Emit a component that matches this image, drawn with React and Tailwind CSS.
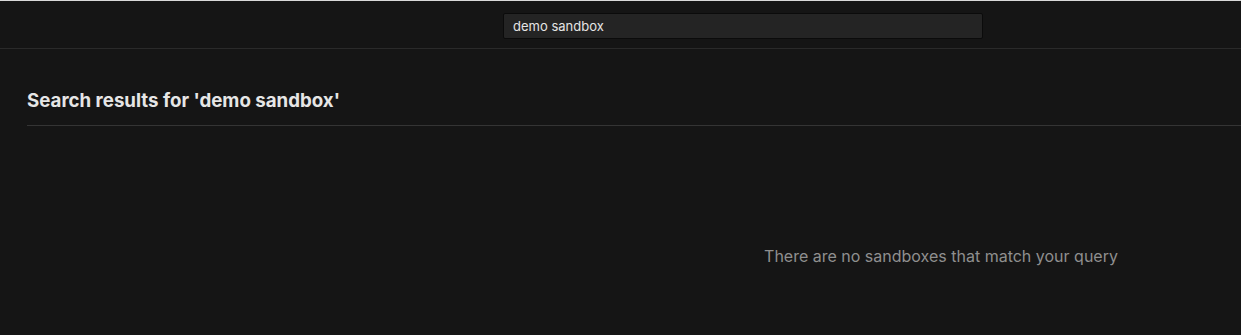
export default function App() {
  return (
    <div
      className="w-[1241px] h-[335px] overflow-hidden bg-[#151515] border-t border-[#d9d9d9]"
      style={{ fontFamily: "Inter, 'Noto Sans', sans-serif" }}
    >
      <header className="h-[48px] flex items-center pl-[503px] pt-[2px] border-b border-[#2a2a2a]">
        <div className="w-[480px] h-[26px] bg-[#242424] border border-[#0b0b0b] rounded-[2px] flex items-center px-[9px] pt-[2px] text-[13px] text-[#e5e5e5]">
          demo sandbox
        </div>
      </header>
      <main className="pl-[27px]">
        <h1 className="pt-[41px] pb-[13px] text-[18.7px] leading-[22px] font-bold text-[#e6e6e6] border-b border-[#343434]">
          Search results for 'demo sandbox'
        </h1>
        <div className="w-[1828px] flex justify-center pt-[120px]">
          <p className="text-[16px] leading-[20px] text-[#8f8f8f]">
            There are no sandboxes that match your query
          </p>
        </div>
      </main>
    </div>
  );
}
